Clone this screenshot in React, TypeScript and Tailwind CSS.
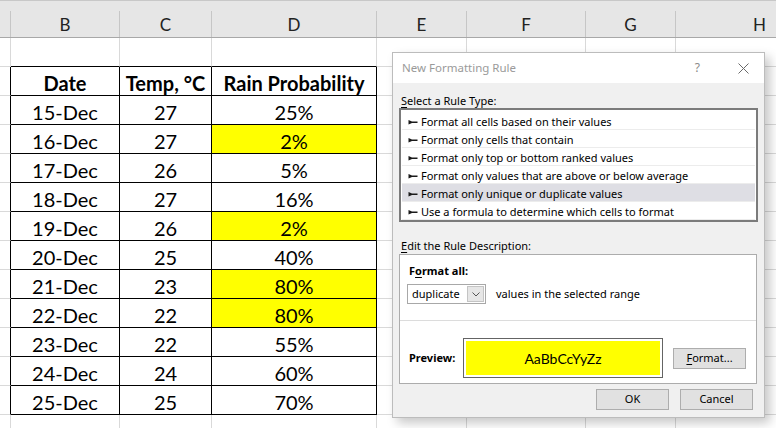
import React from "react"

type Row = {
  date: string
  temp: string
  rain: string
  dup?: boolean
}

const letters = ["", "B", "C", "D", "E", "F", "G", "H"]

const rows: Row[] = [
  { date: "15-Dec", temp: "27", rain: "25%" },
  { date: "16-Dec", temp: "27", rain: "2%", dup: true },
  { date: "17-Dec", temp: "26", rain: "5%" },
  { date: "18-Dec", temp: "27", rain: "16%" },
  { date: "19-Dec", temp: "26", rain: "2%", dup: true },
  { date: "20-Dec", temp: "25", rain: "40%" },
  { date: "21-Dec", temp: "23", rain: "80%", dup: true },
  { date: "22-Dec", temp: "22", rain: "80%", dup: true },
  { date: "23-Dec", temp: "22", rain: "55%" },
  { date: "24-Dec", temp: "24", rain: "60%" },
  { date: "25-Dec", temp: "25", rain: "70%" },
]

const ruleTypes = [
  "Format all cells based on their values",
  "Format only cells that contain",
  "Format only top or bottom ranked values",
  "Format only values that are above or below average",
  "Format only unique or duplicate values",
  "Use a formula to determine which cells to format",
]

const gridCols = "grid grid-cols-[11px_109px_92px_165px_90px_119px_90px_168px]"

// border looks: plain grid line, table cell, left edge of table, top edge of table
const borderKinds = {
  grid: "border-r border-b border-[#d9d9d9]",
  table: "border-r border-b border-black",
  edge: "border-r border-b border-r-black border-b-[#d9d9d9]",
  top: "border-r border-b border-r-[#d9d9d9] border-b-black",
}

function Cell({ children, kind = "grid", fill, bold }: {
  children?: React.ReactNode
  kind?: keyof typeof borderKinds
  fill?: boolean
  bold?: boolean
}) {
  return (
    <div
      className={
        "h-[29px] flex items-center justify-center pt-[3px] leading-[20px] overflow-hidden " +
        borderKinds[kind] + " " +
        (fill ? "bg-[#ffff00] " : "") +
        (bold ? "font-bold" : "")
      }
    >
      {children}
    </div>
  )
}

function Arrow() {
  return (
    <svg width="10" height="7" viewBox="0 0 10 7" className="shrink-0">
      <path d="M0.5 1 L4 2.6 L9.5 2.6 L9.5 4 L4 4 L0.5 5.6 Z" fill="#1a1a1a" />
    </svg>
  )
}

function Btn({ children, className = "" }: { children: React.ReactNode, className?: string }) {
  return (
    <div className={"flex items-center justify-center bg-[#e1e1e1] border border-[#adadad] text-black " + className}>
      {children}
    </div>
  )
}

function Dialog() {
  return (
    <div className="absolute left-[392px] top-[52px] w-[373px] h-[366px] flex flex-col border border-[#bcbcbc] bg-[#f0f0f0] shadow-[5px_5px_10px_rgba(0,0,0,0.22)] font-['Segoe_UI','Noto_Sans',sans-serif] text-[11px] text-black">
      <div className="h-[30px] bg-white flex items-center pl-[9px] text-[#9a9a9a] text-[11.5px]">
        <span>New Formatting Rule</span>
        <span className="ml-auto mr-[38px] text-[#8a8a8a] text-[12px]">?</span>
        <svg width="11" height="11" viewBox="0 0 11 11" className="mr-[15px]">
          <path d="M0.5 0.5 L10.5 10.5 M10.5 0.5 L0.5 10.5" stroke="#6a6a6a" strokeWidth="1" />
        </svg>
      </div>

      <div className="flex flex-col px-[6px]">
        <div className="h-[16px] mt-[9px] pl-[2px] leading-[16px] pt-px">
          <span className="underline underline-offset-2">S</span>elect a Rule Type:
        </div>
        <div className="w-[359px] h-[114px] border-2 border-[#7b7b7b] bg-white pt-[2px] px-[1px]">
          {ruleTypes.map((t, i) => (
            <div
              key={t}
              className={"h-[18px] flex items-center gap-[3px] pl-[6px] pt-[3px] border-b border-[#ececec] " + (i === 4 ? "bg-[#dedee4]" : "")}
            >
              <Arrow />
              <span>{t}</span>
            </div>
          ))}
        </div>

        <div className="h-[16px] mt-[15px] pl-[2px] leading-[16px] pt-px">
          <span className="underline underline-offset-2">E</span>dit the Rule Description:
        </div>
        <div className="w-[358px] h-[130px] mt-[1px] border border-[#acacac] bg-white flex flex-col">
          <div className="pl-[9px] pt-[8px] h-[24px] leading-[16px] font-bold">
            F<span className="underline underline-offset-2">o</span>rmat all:
          </div>
          <div className="flex items-center pl-[7px] mt-[5px]">
            <div className="w-[79px] h-[20px] border border-[#a8a8a8] flex items-center pl-[4px]">
              <span>duplicate</span>
              <div className="ml-auto mr-[1px] w-[17px] h-[16px] bg-[#e6e6e6] border border-[#c4c4c4] flex items-center justify-center">
                <svg width="8" height="5" viewBox="0 0 8 5">
                  <path d="M0.5 0.5 L4 4 L7.5 0.5" fill="none" stroke="#555" strokeWidth="1" />
                </svg>
              </div>
            </div>
            <span className="ml-[10px]">values in the selected range</span>
          </div>
          <div className="mt-[16px] h-px bg-[#dcdcdc]" />
          <div className="flex items-center pl-[9px] mt-[17px]">
            <div className="w-[54px] font-bold">Preview:</div>
            <div className="w-[200px] h-[40px] border border-[#646464] p-[2px]">
              <div className="w-full h-full bg-[#ffff00] flex items-center justify-center font-['Lato',sans-serif] text-[14px]">
                AaBbCcYyZz
              </div>
            </div>
            <Btn className="ml-[10px] w-[73px] h-[21px]">
              <span className="underline underline-offset-2">F</span>ormat...
            </Btn>
          </div>
        </div>

        <div className="flex justify-end gap-[11px] pr-[5px] mt-[5px]">
          <Btn className="w-[73px] h-[21px]">OK</Btn>
          <Btn className="w-[73px] h-[21px]">Cancel</Btn>
        </div>
      </div>
    </div>
  )
}

export default function App() {
  return (
    <div className="relative w-[776px] h-[428px] overflow-hidden bg-white font-['Lato',sans-serif] text-black">
      <div className="w-[844px]">
        <div className="h-[38px] flex flex-col bg-[#e6e6e6] border-t border-t-[#c8c8c8] border-b border-b-[#a8a8a8]">
          <div className="h-[10px]" />
          <div className={gridCols + " flex-1"}>
            {letters.map((l, i) => (
              <div key={i} className="h-[26px] pt-[2px] leading-[20px] border-r border-[#c6c6c6] flex items-center justify-center text-[17px] text-[#222]">
                {l}
              </div>
            ))}
          </div>
        </div>

        <div className={gridCols}>
          {letters.map((_, i) => (
            <Cell key={i} kind={i >= 1 && i <= 3 ? "top" : "grid"} />
          ))}
        </div>

        <div className={gridCols + " text-[20px]"}>
          <Cell kind="edge" />
          <Cell kind="table" bold>Date</Cell>
          <Cell kind="table" bold>Temp, °C</Cell>
          <Cell kind="table" bold>Rain Probability</Cell>
          <Cell /><Cell /><Cell /><Cell />
        </div>

        {rows.map((r) => (
          <div key={r.date} className={gridCols + " text-[20px]"}>
            <Cell kind="edge" />
            <Cell kind="table">{r.date}</Cell>
            <Cell kind="table">{r.temp}</Cell>
            <Cell kind="table" fill={r.dup}>{r.rain}</Cell>
            <Cell /><Cell /><Cell /><Cell />
          </div>
        ))}

        <div className={gridCols}>
          {letters.map((_, i) => (
            <Cell key={i} />
          ))}
        </div>
      </div>

      <Dialog />
    </div>
  )
}
